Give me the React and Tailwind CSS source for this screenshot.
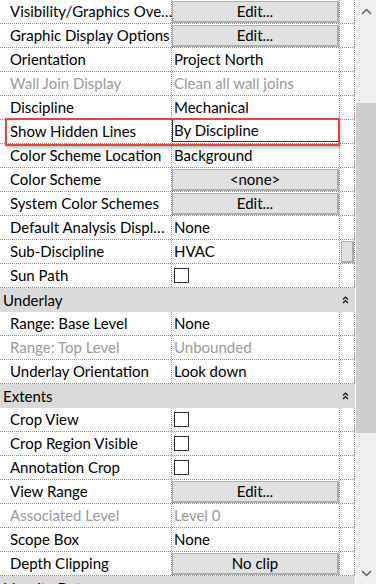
import React from 'react';

const rows = [
  { label: 'Visibility/Graphics Ove…', button: 'Edit...' },
  { label: 'Graphic Display Options', button: 'Edit...' },
  { label: 'Orientation', value: 'Project North' },
  { label: 'Wall Join Display', value: 'Clean all wall joins', dim: true },
  { label: 'Discipline', value: 'Mechanical' },
  { label: 'Show Hidden Lines', value: 'By Discipline', editing: true },
  { label: 'Color Scheme Location', value: 'Background' },
  { label: 'Color Scheme', button: '<none>' },
  { label: 'System Color Schemes', button: 'Edit...' },
  { label: 'Default Analysis Displ…', value: 'None' },
  { label: 'Sub-Discipline', value: 'HVAC', spin: true },
  { label: 'Sun Path', check: true },
  { section: 'Underlay' },
  { label: 'Range: Base Level', value: 'None' },
  { label: 'Range: Top Level', value: 'Unbounded', dim: true },
  { label: 'Underlay Orientation', value: 'Look down' },
  { section: 'Extents' },
  { label: 'Crop View', check: true },
  { label: 'Crop Region Visible', check: true },
  { label: 'Annotation Crop', check: true },
  { label: 'View Range', button: 'Edit...' },
  { label: 'Associated Level', value: 'Level 0', dim: true },
  { label: 'Scope Box', value: 'None' },
  { label: 'Depth Clipping', button: 'No clip' },
  { section: 'Identity Data' },
];

function Collapse() {
  return (
    <svg width="7" height="8" viewBox="0 0 7 8" fill="none" stroke="#111" strokeWidth="1.2">
      <polyline points="1,3.5 3.5,1 6,3.5" />
      <polyline points="1,7 3.5,4.5 6,7" />
    </svg>
  );
}

function Chevron({ down }) {
  return (
    <svg width="11" height="7" viewBox="0 0 11 7" fill="none" stroke="#606060" strokeWidth="1.5">
      <polyline points={down ? '1,1 5.5,5.5 10,1' : '1,6 5.5,1.5 10,6'} />
    </svg>
  );
}

function Row({ row }) {
  if (row.section) {
    return (
      <div className="flex h-[24px] shrink-0 items-center bg-[#dadada]">
        <div className="flex-1 pl-[3px]">{row.section}</div>
        <div className="flex w-[15px] justify-start pl-[2px]">
          <Collapse />
        </div>
      </div>
    );
  }
  const text = row.dim ? 'text-[#9a9a9a]' : 'text-black';
  return (
    <div className="flex h-[24px] shrink-0 border-b border-dotted border-[#8c8c8c]">
      <div className={`flex w-[172px] items-center border-r border-dotted border-[#8c8c8c] pl-[10px] whitespace-nowrap ${text}`}>
        {row.label}
      </div>
      <div className="flex w-[168px] border-r border-dotted border-[#8c8c8c]">
        {row.button && (
          <div className="mt-[1px] flex h-[22px] w-full items-center justify-center border-t border-l border-r-2 border-b-2 border-[#adadad] bg-[#e1e1e1]">
            {row.button}
          </div>
        )}
        {row.value && !row.editing && (
          <div className={`flex items-center pl-[2px] whitespace-nowrap ${text}`}>{row.value}</div>
        )}
        {row.editing && (
          <div className="mt-[-1px] flex h-[23px] w-full items-center border border-[#333] pl-[1px]">{row.value}</div>
        )}
        {row.check && (
          <div className="flex items-center pl-[2px]">
            <div className="h-[15px] w-[15px] border border-[#333] bg-white" />
          </div>
        )}
      </div>
      <div className="flex w-[15px] border-r border-dotted border-[#8c8c8c]">
        {row.spin && (
          <div className="mt-[1px] ml-[1px] h-[22px] w-[13px] border-t border-l border-r-2 border-b-2 border-[#adadad] bg-[#e1e1e1]" />
        )}
      </div>
    </div>
  );
}

export default function App() {
  return (
    <div className="flex h-[584px] w-[376px] overflow-hidden bg-white font-['Lato',sans-serif] text-[15px] text-black">
      <div className="relative flex w-[355px] flex-col">
        {rows.map((row, i) => (
          <Row key={i} row={row} />
        ))}
        <div className="pointer-events-none absolute left-[5px] top-[118px] h-[28px] w-[335px] border-2 border-[#f0403c] shadow-[1px_2px_3px_rgba(0,0,0,0.25)]" />
      </div>
      <div className="ml-[1px] flex w-[20px] flex-col bg-[#f0f0f0]">
        <div className="flex h-[22px] items-center justify-center">
          <Chevron />
        </div>
        <div className="mt-[81px] h-[330px] bg-[#cdcdcd]" />
        <div className="flex-1" />
        <div className="flex h-[22px] items-center justify-center">
          <Chevron down />
        </div>
      </div>
    </div>
  );
}
